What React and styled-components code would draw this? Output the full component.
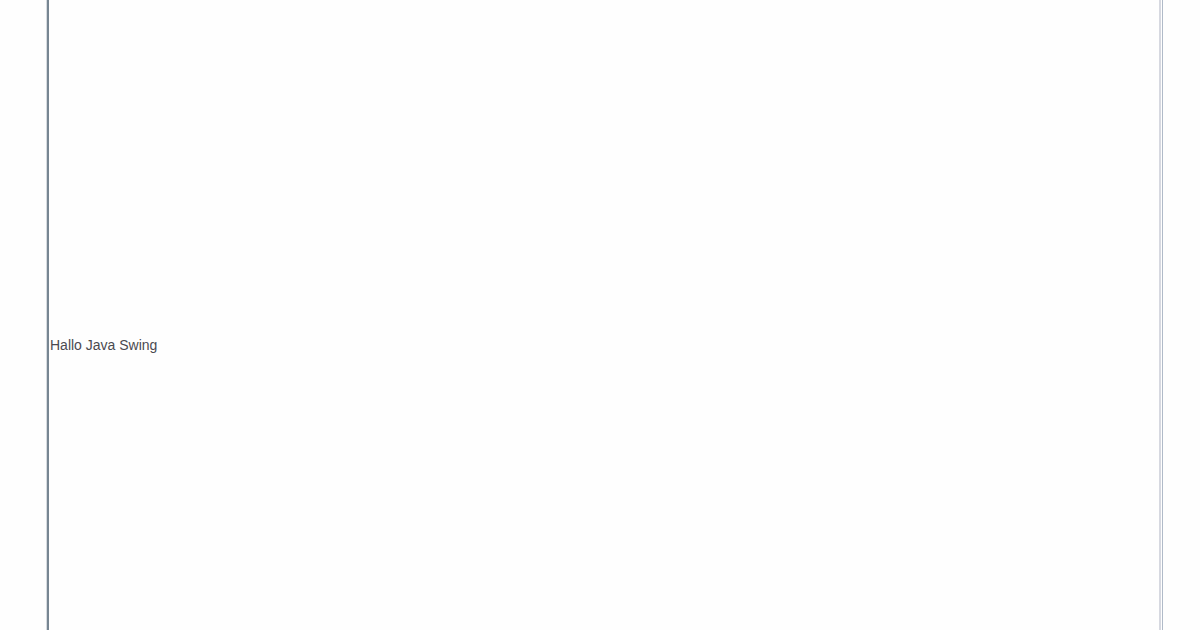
import React from "react";
import styled, { createGlobalStyle } from "styled-components";

function App() {
  return (
    <>
      <GlobalStyle />
      <Desktop>
        <Frame>
          <Content>
            <Label>Hallo Java Swing</Label>
          </Content>
        </Frame>
      </Desktop>
    </>
  );
}

export default App;

const GlobalStyle = createGlobalStyle`
  body {
    margin: 0;
    background: #fefefe;
  }
`;

const Desktop = styled.main`
  display: flex;
  box-sizing: border-box;
  min-height: 100vh;
  padding: 0 37px 0 46px;
`;

/* window border: light outer line, darker inner line */
const Frame = styled.div`
  display: flex;
  flex: 1;
  border-left: 1px solid #d6dbe0;
  border-right: 1px solid #b0bac8;
`;

const Content = styled.div`
  display: flex;
  flex: 1;
  align-items: center;
  box-sizing: border-box;
  margin-right: 1px;
  padding: 60px 0 0 1px;
  border-left: 2px solid #778692;
  border-right: 2px solid #d6d8e0;
  background: #fefefe;
`;

const Label = styled.span`
  color: #4a4a50;
  font-family: "Liberation Sans", Arial, sans-serif;
  font-size: 14px;
  line-height: 16px;
  white-space: nowrap;
`;
